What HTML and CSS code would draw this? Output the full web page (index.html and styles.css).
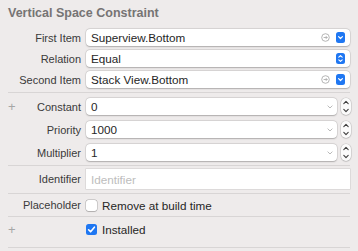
FILE: index.html
```html
<!DOCTYPE html>
<html lang="en">
<head>
    <meta charset="UTF-8">
    <title>Vertical Space Constraint</title>
    <link rel="stylesheet" href="styles.css">
</head>
<body>
    <div class="inspector">
        <h1 class="title">Vertical Space Constraint</h1>

        <div class="group group-items">
            <div class="row">
                <div class="label"><span>First Item</span></div>
                <div class="field popup">
                    <span class="value">Superview.Bottom</span>
                    <svg class="goto" width="9" height="9" viewBox="0 0 9 9"><circle cx="4.5" cy="4.5" r="3.8" fill="none" stroke="#a3a3a3" stroke-width="0.8"/><path d="M2.6 4.5 H6.2 M4.8 3.1 L6.2 4.5 L4.8 5.9" fill="none" stroke="#a3a3a3" stroke-width="0.8"/></svg>
                    <span class="blue-btn"><svg width="9" height="11" viewBox="0 0 9 11"><path d="M2.6 4.6 L4.5 6.5 L6.4 4.6" fill="none" stroke="#fff" stroke-width="1.2" stroke-linecap="round" stroke-linejoin="round"/></svg></span>
                </div>
            </div>
            <div class="row">
                <div class="label"><span>Relation</span></div>
                <div class="field popup">
                    <span class="value">Equal</span>
                    <span class="blue-btn"><svg width="9" height="11" viewBox="0 0 9 11"><path d="M2.8 4.2 L4.5 2.6 L6.2 4.2 M2.8 6.8 L4.5 8.4 L6.2 6.8" fill="none" stroke="#fff" stroke-width="1.1" stroke-linecap="round" stroke-linejoin="round"/></svg></span>
                </div>
            </div>
            <div class="row">
                <div class="label"><span>Second Item</span></div>
                <div class="field popup">
                    <span class="value">Stack View.Bottom</span>
                    <svg class="goto" width="9" height="9" viewBox="0 0 9 9"><circle cx="4.5" cy="4.5" r="3.8" fill="none" stroke="#a3a3a3" stroke-width="0.8"/><path d="M2.6 4.5 H6.2 M4.8 3.1 L6.2 4.5 L4.8 5.9" fill="none" stroke="#a3a3a3" stroke-width="0.8"/></svg>
                    <span class="blue-btn"><svg width="9" height="11" viewBox="0 0 9 11"><path d="M2.6 4.6 L4.5 6.5 L6.4 4.6" fill="none" stroke="#fff" stroke-width="1.2" stroke-linecap="round" stroke-linejoin="round"/></svg></span>
                </div>
            </div>
        </div>

        <hr class="sep">

        <div class="group group-values">
            <div class="row">
                <div class="label"><span class="plus">+</span><span>Constant</span></div>
                <div class="field combo">
                    <span class="value">0</span>
                    <svg class="caret" width="6" height="4" viewBox="0 0 6 4"><path d="M0.6 0.6 L3 3 L5.4 0.6" fill="none" stroke="#a8a8a8" stroke-width="0.8"/></svg>
                </div>
                <span class="stepper"><svg width="10" height="17" viewBox="0 0 10 17"><path d="M2.8 5.6 L5 3.4 L7.2 5.6 M2.8 11.4 L5 13.6 L7.2 11.4" fill="none" stroke="#3c3c3c" stroke-width="1.1" stroke-linecap="round" stroke-linejoin="round"/></svg></span>
            </div>
            <div class="row">
                <div class="label"><span>Priority</span></div>
                <div class="field combo">
                    <span class="value">1000</span>
                    <svg class="caret" width="6" height="4" viewBox="0 0 6 4"><path d="M0.6 0.6 L3 3 L5.4 0.6" fill="none" stroke="#a8a8a8" stroke-width="0.8"/></svg>
                </div>
                <span class="stepper"><svg width="10" height="17" viewBox="0 0 10 17"><path d="M2.8 5.6 L5 3.4 L7.2 5.6 M2.8 11.4 L5 13.6 L7.2 11.4" fill="none" stroke="#3c3c3c" stroke-width="1.1" stroke-linecap="round" stroke-linejoin="round"/></svg></span>
            </div>
            <div class="row">
                <div class="label"><span>Multiplier</span></div>
                <div class="field combo">
                    <span class="value">1</span>
                    <svg class="caret" width="6" height="4" viewBox="0 0 6 4"><path d="M0.6 0.6 L3 3 L5.4 0.6" fill="none" stroke="#a8a8a8" stroke-width="0.8"/></svg>
                </div>
                <span class="stepper"><svg width="10" height="17" viewBox="0 0 10 17"><path d="M2.8 5.6 L5 3.4 L7.2 5.6 M2.8 11.4 L5 13.6 L7.2 11.4" fill="none" stroke="#3c3c3c" stroke-width="1.1" stroke-linecap="round" stroke-linejoin="round"/></svg></span>
            </div>
        </div>

        <hr class="sep">

        <div class="row row-ident">
            <div class="label"><span>Identifier</span></div>
            <div class="field text-field">
                <span class="placeholder">Identifier</span>
            </div>
        </div>

        <hr class="sep">

        <div class="row row-check">
            <div class="label"><span>Placeholder</span></div>
            <label class="check">
                <span class="box"></span>
                <span>Remove at build time</span>
            </label>
        </div>

        <hr class="sep">

        <div class="row row-installed">
            <div class="label"><span class="plus">+</span></div>
            <label class="check">
                <span class="box checked"><svg width="11" height="11" viewBox="0 0 11 11"><path d="M2.6 5.8 L4.6 7.8 L8.4 3.2" fill="none" stroke="#fff" stroke-width="1.6" stroke-linecap="round" stroke-linejoin="round"/></svg></span>
                <span>Installed</span>
            </label>
        </div>

        <hr class="sep">
    </div>
</body>
</html>
```

FILE: styles.css
```css
body {
    margin: 0;
    padding: 0;
    background-color: #eeebeb;
    font-family: "Liberation Sans", Arial, sans-serif;
    color: #2b2b2b;
}
.inspector {
    width: 358px;
    height: 251px;
    overflow: hidden;
}
.title {
    margin: 0;
    padding: 5px 0 0 8px;
    font-size: 12.5px;
    line-height: 16px;
    font-weight: bold;
    color: #767474;
}
.group {
    display: flex;
    flex-direction: column;
}
.group-items {
    padding-top: 8px;
    gap: 4px;
}
.group-values {
    padding-top: 5px;
    gap: 6px;
}
.row {
    display: flex;
    align-items: center;
    height: 17px;
}
.label {
    width: 81px;
    flex-shrink: 0;
    display: flex;
    justify-content: flex-end;
    align-items: center;
    font-size: 11px;
    color: #3a3a3a;
}
.label .plus {
    margin-left: 8px;
    margin-right: auto;
    font-size: 13px;
    font-weight: 300;
    color: #a6a6a6;
}
.field {
    height: 17px;
    margin-left: 5px;
    background: #fff;
    border-radius: 4px;
    box-shadow: 0 0 0 0.5px rgba(0, 0, 0, 0.12), 0 0.5px 1.5px rgba(0, 0, 0, 0.22);
    display: flex;
    align-items: center;
    box-sizing: border-box;
    padding-left: 5px;
    font-size: 11.7px;
    color: #262626;
}
.field .value {
    flex: 1;
}
.popup {
    width: 264px;
    padding-right: 5px;
}
.goto {
    margin-right: 6px;
}
.blue-btn {
    width: 9px;
    height: 11px;
    border-radius: 2.5px;
    background: #1f77f2;
    display: flex;
}
.combo {
    width: 251px;
    padding-right: 4px;
}
.caret {
    margin-top: 1px;
}
.stepper {
    width: 10px;
    height: 17px;
    margin-left: 4px;
    border-radius: 5px;
    background: #fbfbfb;
    box-shadow: 0 0 0 0.5px rgba(0, 0, 0, 0.14), 0 0.5px 1.5px rgba(0, 0, 0, 0.2);
    display: flex;
}
.sep {
    margin: 0 8px;
    height: 1px;
    border: 0;
    background: #d8d5d5;
}
.group-items + .sep {
    margin-top: 4px;
}
.group-values + .sep {
    margin-top: 4px;
}
.row-ident {
    height: 20px;
    margin-top: 3px;
    margin-bottom: 4px;
}
.text-field {
    width: 264px;
    height: 20px;
    border-radius: 0;
    box-shadow: 0 0 0 0.5px rgba(0, 0, 0, 0.14);
}
.placeholder {
    color: #bdbdbd;
}
.row-check {
    height: 22px;
}
.row-installed {
    height: 30px;
    align-items: flex-start;
    padding-top: 6px;
    box-sizing: border-box;
}
.row-installed .label {
    height: 13px;
}
.check {
    display: flex;
    align-items: center;
    margin-left: 5px;
    font-size: 11.7px;
    color: #262626;
}
.box {
    width: 11px;
    height: 11px;
    margin-right: 5px;
    border-radius: 2.5px;
    background: #fff;
    box-sizing: border-box;
    box-shadow: 0 0 0 0.5px rgba(0, 0, 0, 0.25), 0 0.5px 1px rgba(0, 0, 0, 0.15);
    display: flex;
}
.box.checked {
    background: #1f77f2;
    box-shadow: none;
}
```
